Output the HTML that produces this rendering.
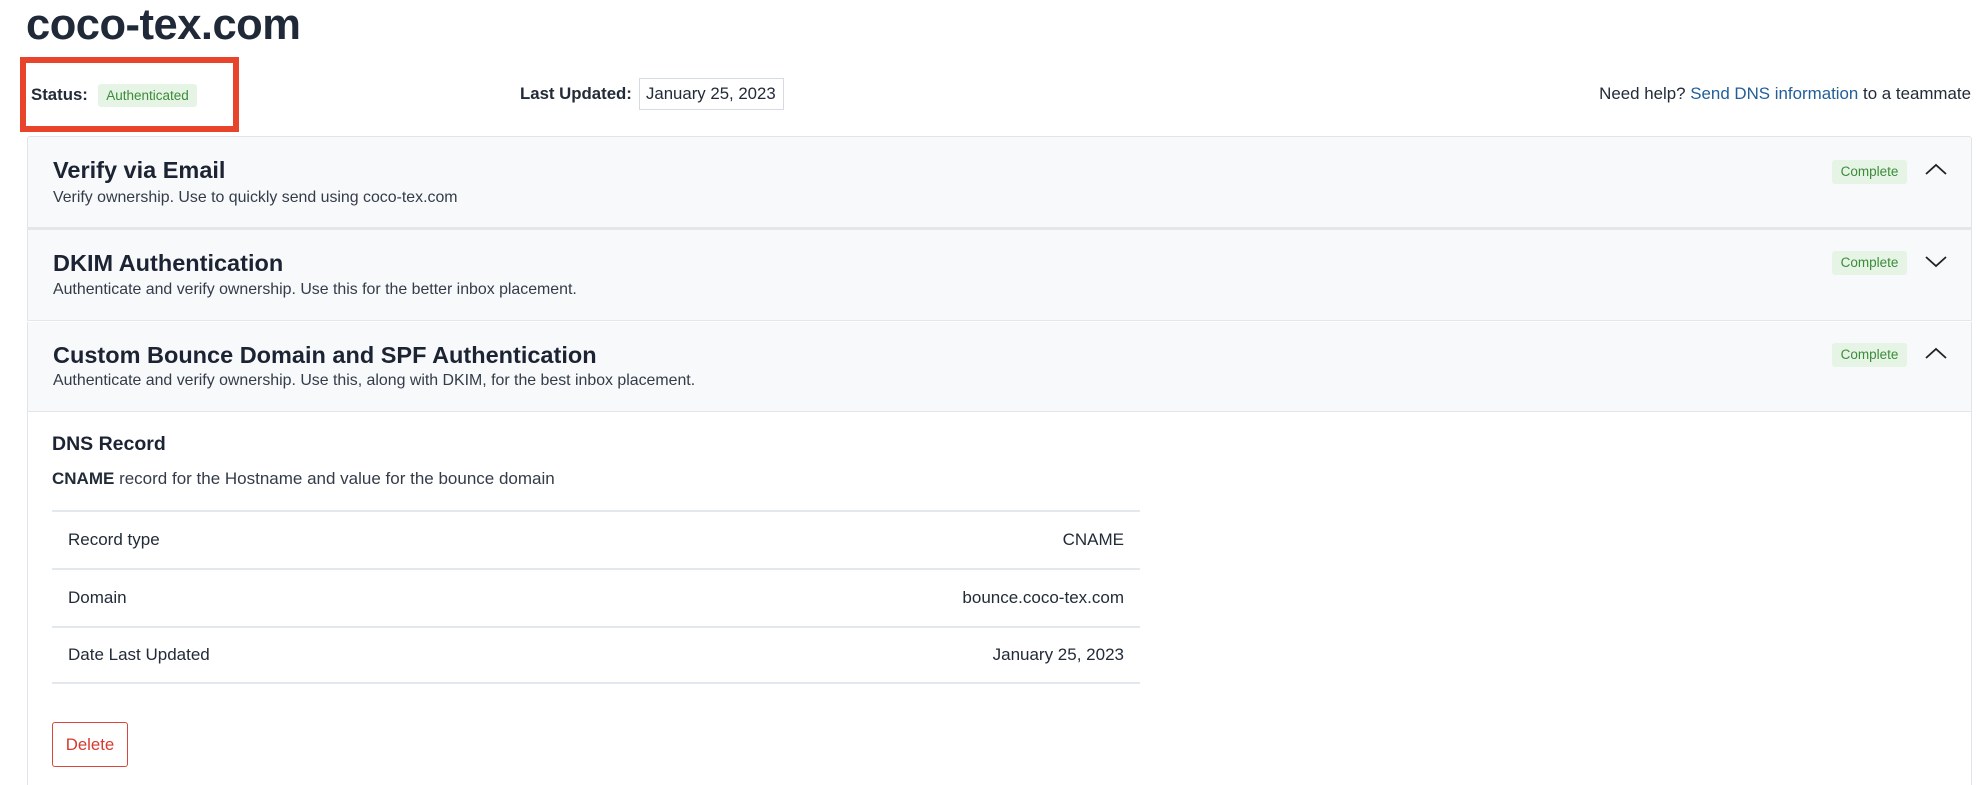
<!DOCTYPE html>
<html><head><meta charset="utf-8"><style>
*{box-sizing:border-box;margin:0;padding:0}
body{width:1980px;height:785px;overflow:hidden;background:#fff;font-family:"Liberation Sans",Arial,sans-serif;color:#222b38;position:relative}
.abs{position:absolute}
h1{position:absolute;left:26px;top:1px;font-size:43.5px;font-weight:bold;color:#202938;letter-spacing:-0.5px}
.redbox{left:20px;top:57px;width:219px;height:75px;border:6px solid #e8432b}
.badge{background:#e5f4e5;color:#3d8b3a;border-radius:3px;font-size:13.5px;text-align:center}
.sec{left:27px;width:1945px;background:#f8f9fb;border-left:1px solid #e1e4e8;border-right:1px solid #e1e4e8}
.sec .t{position:absolute;left:25px;font-size:23.5px;font-weight:bold;color:#1c2333}
.sec .s{position:absolute;left:25px;font-size:15.9px;color:#333c48}
.sec .badge{position:absolute;left:1804px;width:75px;height:24px;line-height:24px}
.sec svg{position:absolute;left:1896px}
.row{position:absolute;left:52px;width:1088px;border-top:2px solid #e3e7ee;font-size:17px}
.row span{position:absolute;top:50%;transform:translateY(-50%)}
</style></head><body>
<h1>coco-tex.com</h1>
<div class="abs redbox"></div>
<div class="abs" style="left:31px;top:85px;font-size:16.8px;font-weight:bold">Status:</div>
<div class="abs badge" style="left:98px;top:84px;width:99px;height:23px;line-height:23px">Authenticated</div>
<div class="abs" style="left:520px;top:84px;font-size:16.8px;font-weight:bold">Last Updated:</div>
<div class="abs" style="left:639px;top:78px;width:145px;height:32px;border:1px solid #d7dce3;font-size:16.8px;line-height:30px;padding-left:6px">January 25, 2023</div>
<div class="abs" style="right:9px;top:84px;font-size:16.9px">Need help? <span style="color:#225f99">Send DNS information</span> to a teammate</div>

<div class="abs sec" style="top:136px;height:91px;border-top:1px solid #e1e4e8;border-radius:3px 3px 0 0">
<div class="t" style="top:20px">Verify via Email</div>
<div class="s" style="top:52px">Verify ownership. Use to quickly send using coco-tex.com</div>
<div class="badge" style="top:23px">Complete</div>
<svg style="top:25px" width="24" height="14"><path d="M2 12 L12 3 L22 12" fill="none" stroke="#222" stroke-width="1.8"/></svg>
</div>
<div class="abs" style="left:27px;top:227px;width:1945px;height:3px;background:#e4e6ea"></div>
<div class="abs sec" style="top:230px;height:91px;border-bottom:1px solid #e4e6ea">
<div class="t" style="top:20px">DKIM Authentication</div>
<div class="s" style="top:51px">Authenticate and verify ownership. Use this for the better inbox placement.</div>
<div class="badge" style="top:21px">Complete</div>
<svg style="top:25px" width="24" height="14"><path d="M2 2 L12 11 L22 2" fill="none" stroke="#222" stroke-width="1.8"/></svg>
</div>
<div class="abs sec" style="top:322px;height:90px;border-bottom:1px solid #e4e6ea">
<div class="t" style="top:20px">Custom Bounce Domain and SPF Authentication</div>
<div class="s" style="top:50px">Authenticate and verify ownership. Use this, along with DKIM, for the best inbox placement.</div>
<div class="badge" style="top:21px">Complete</div>
<svg style="top:24px" width="24" height="14"><path d="M2 12 L12 3 L22 12" fill="none" stroke="#222" stroke-width="1.8"/></svg>
</div>
<div class="abs" style="left:27px;top:412px;width:1px;height:373px;background:#e1e4e8"></div>
<div class="abs" style="left:1971px;top:412px;width:1px;height:373px;background:#e1e4e8"></div>

<div class="abs" style="left:52px;top:433px;font-size:19.5px;font-weight:bold;color:#1c2333">DNS Record</div>
<div class="abs" style="left:52px;top:469px;font-size:17px;color:#333c48"><b style="color:#222b38">CNAME</b> record for the Hostname and value for the bounce domain</div>
<div class="row" style="top:510px;height:58px"><span style="left:16px">Record type</span><span style="right:16px">CNAME</span></div>
<div class="row" style="top:568px;height:58px"><span style="left:16px">Domain</span><span style="right:16px">bounce.coco-tex.com</span></div>
<div class="row" style="top:626px;height:58px;border-bottom:2px solid #e3e7ee"><span style="left:16px">Date Last Updated</span><span style="right:16px">January 25, 2023</span></div>
<div class="abs" style="left:52px;top:722px;width:76px;height:45px;border:1px solid #d9463b;border-radius:3px;color:#d63a30;font-size:16.8px;text-align:center;line-height:43px">Delete</div>
</body></html>
